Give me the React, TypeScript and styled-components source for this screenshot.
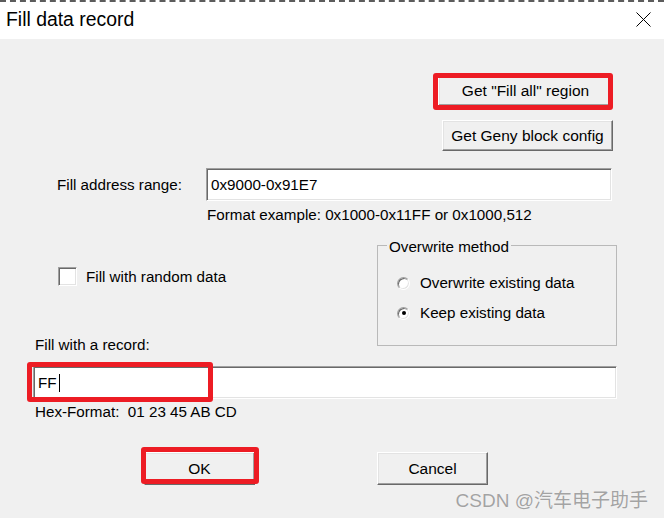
import styled, { createGlobalStyle } from 'styled-components';

const GlobalStyle = createGlobalStyle`
	html, body {
		margin: 0;
		padding: 0;
		background: #f0f0f0;
	}
	body {
		font-family: "Liberation Sans", Arial, sans-serif;
	}
	*, *::before, *::after {
		box-sizing: border-box;
	}
`;

const Window = styled.div`
	position: relative;
	width: 664px;
	height: 518px;
	display: flex;
	flex-direction: column;
	background: #f0f0f0;
	overflow: hidden;
`;

const TitleBar = styled.div`
	flex: none;
	height: 39px;
	background: #fff;
	border-top: 2px dashed #5c5c5c;
	display: flex;
	align-items: center;
	justify-content: space-between;
	padding: 0 13px 3px 6px;
`;

const Title = styled.span`
	font-size: 19.4px;
	color: #000;
`;

const CloseButton = styled.span`
	display: flex;
	width: 15px;
	height: 15px;
`;

const Body = styled.div`
	flex: 1;
	display: flex;
	flex-direction: column;
	font-size: 15.2px;
	line-height: 18px;
	color: #000;
`;

const TopActions = styled.div`
	display: flex;
	flex-direction: column;
	align-items: flex-end;
	gap: 14px;
	margin-top: 37px;
	padding-right: 51px;
`;

const Button = styled.button<{ $w: number; $h?: number }>`
	width: ${p => p.$w}px;
	height: ${p => p.$h ?? 31}px;
	padding: 0;
	font-family: inherit;
	font-size: 15.5px;
	color: #000;
	background: #f0f0f0;
	border: 1px solid;
	border-color: #fff #696969 #696969 #fff;
	box-shadow: inset -1px -1px 0 #a0a0a0, inset 1px 1px 0 #e3e3e3;
`;

const Marked = styled.div`
	position: relative;
	display: inline-flex;
`;

const RedFrame = styled.span<{ $l: number; $t: number; $w: number; $h: number }>`
	position: absolute;
	left: ${p => p.$l}px;
	top: ${p => p.$t}px;
	width: ${p => p.$w}px;
	height: ${p => p.$h}px;
	border: 5px solid #ed1c24;
	border-radius: 3px;
	pointer-events: none;
`;

const FieldRow = styled.div`
	display: flex;
	align-items: flex-start;
	margin-top: 17px;
	padding-left: 57px;
`;

const FieldLabel = styled.label`
	width: 149px;
	line-height: 33px;
`;

const FieldColumn = styled.div`
	display: flex;
	flex-direction: column;
	gap: 5px;
`;

const TextBox = styled.div<{ $w: number }>`
	width: ${p => p.$w}px;
	height: 33px;
	display: flex;
	align-items: center;
	padding-left: 4px;
	background: #fff;
	border: 1px solid;
	border-color: #a0a0a0 #fff #fff #a0a0a0;
	box-shadow: inset 1px 1px 0 #696969, inset -1px -1px 0 #e3e3e3;
`;

const Hint = styled.div`
	padding-left: 1px;
`;

const MiddleRow = styled.div`
	display: flex;
	justify-content: space-between;
	align-items: flex-start;
	margin-top: 10px;
	padding: 0 47px 0 58px;
`;

const CheckOption = styled.label`
	display: flex;
	align-items: center;
	gap: 9px;
	margin-top: 33px;
`;

const CheckBox = styled.span`
	width: 19px;
	height: 19px;
	background: #fff;
	border: 1px solid;
	border-color: #a0a0a0 #fff #fff #a0a0a0;
	box-shadow: inset 1px 1px 0 #696969, inset -1px -1px 0 #e3e3e3;
`;

const GroupBox = styled.fieldset`
	width: 240px;
	height: 112px;
	margin: 0;
	padding: 0;
	border: 1px solid #b9b9b9;
`;

const Legend = styled.legend`
	margin-left: 9px;
	padding: 4px 2px 0;
	line-height: 18px;
`;

const RadioList = styled.div`
	display: flex;
	flex-direction: column;
	padding: 12px 0 0 19px;
`;

const RadioOption = styled.label`
	display: flex;
	align-items: center;
	gap: 10px;
	height: 30px;
`;

const Radio = styled.span<{ $checked?: boolean }>`
	position: relative;
	width: 13px;
	height: 13px;
	border-radius: 50%;
	background: #fff;
	border: 1px solid;
	border-color: #a0a0a0 #fff #fff #a0a0a0;
	box-shadow: inset 1px 1px 0 #696969, inset -1px -1px 0 #e3e3e3;

	&::after {
		content: '';
		display: ${p => (p.$checked ? 'block' : 'none')};
		position: absolute;
		left: 3.5px;
		top: 3.5px;
		width: 4px;
		height: 4px;
		border-radius: 50%;
		background: #000;
	}
`;

const RecordSection = styled.div`
	display: flex;
	flex-direction: column;
	align-items: flex-start;
	margin-top: -10px;
	padding-left: 33px;
`;

const RecordLabel = styled.div`
	padding-left: 2px;
	margin-bottom: 12px;
`;

const Caret = styled.span`
	width: 1px;
	height: 18px;
	margin-left: 2px;
	background: #000;
`;

const HexHint = styled.div`
	margin-top: 4px;
	padding-left: 2px;
	white-space: pre;
`;

const Footer = styled.div`
	display: flex;
	align-items: flex-start;
	gap: 122px;
	margin-top: 31px;
	padding-left: 144px;
`;

const Watermark = styled.div`
	position: absolute;
	right: 16px;
	bottom: 6px;
	font-family: "Liberation Sans", "Noto Sans CJK SC", sans-serif;
	font-size: 19px;
	line-height: 22px;
	color: #a3a3a3;
	text-shadow: 0 0 1px #fff;
`;

const App = () => {
	return (
		<>
			<GlobalStyle />
			<Window>
				<TitleBar>
					<Title>Fill data record</Title>
					<CloseButton>
						<svg width="15" height="15" viewBox="0 0 15 15">
							<path d="M0.5 0.5 L14.5 14.5 M14.5 0.5 L0.5 14.5" stroke="#000" strokeWidth="1" fill="none" />
						</svg>
					</CloseButton>
				</TitleBar>
				<Body>
					<TopActions>
						<Marked>
							<Button $w={175} $h={30}>Get "Fill all" region</Button>
							<RedFrame $l={-5} $t={-3} $w={180} $h={37} />
						</Marked>
						<Button $w={171}>Get Geny block config</Button>
					</TopActions>

					<FieldRow>
						<FieldLabel>Fill address range:</FieldLabel>
						<FieldColumn>
							<TextBox $w={406}>0x9000-0x91E7</TextBox>
							<Hint>Format example: 0x1000-0x11FF or 0x1000,512</Hint>
						</FieldColumn>
					</FieldRow>

					<MiddleRow>
						<CheckOption>
							<CheckBox />
							Fill with random data
						</CheckOption>
						<GroupBox>
							<Legend>Overwrite method</Legend>
							<RadioList>
								<RadioOption>
									<Radio />
									Overwrite existing data
								</RadioOption>
								<RadioOption>
									<Radio $checked />
									Keep existing data
								</RadioOption>
							</RadioList>
						</GroupBox>
					</MiddleRow>

					<RecordSection>
						<RecordLabel>Fill with a record:</RecordLabel>
						<Marked>
							<TextBox $w={584}>
								FF
								<Caret />
							</TextBox>
							<RedFrame $l={-6} $t={-4} $w={186} $h={40} />
						</Marked>
						<HexHint>{'Hex-Format:  01 23 45 AB CD'}</HexHint>
					</RecordSection>

					<Footer>
						<Marked>
							<Button $w={111} $h={33}>OK</Button>
							<RedFrame $l={-3} $t={-5} $w={118} $h={37} />
						</Marked>
						<Button $w={111} $h={33}>Cancel</Button>
					</Footer>
				</Body>
				<Watermark>CSDN @汽车电子助手</Watermark>
			</Window>
		</>
	);
};

export default App;
